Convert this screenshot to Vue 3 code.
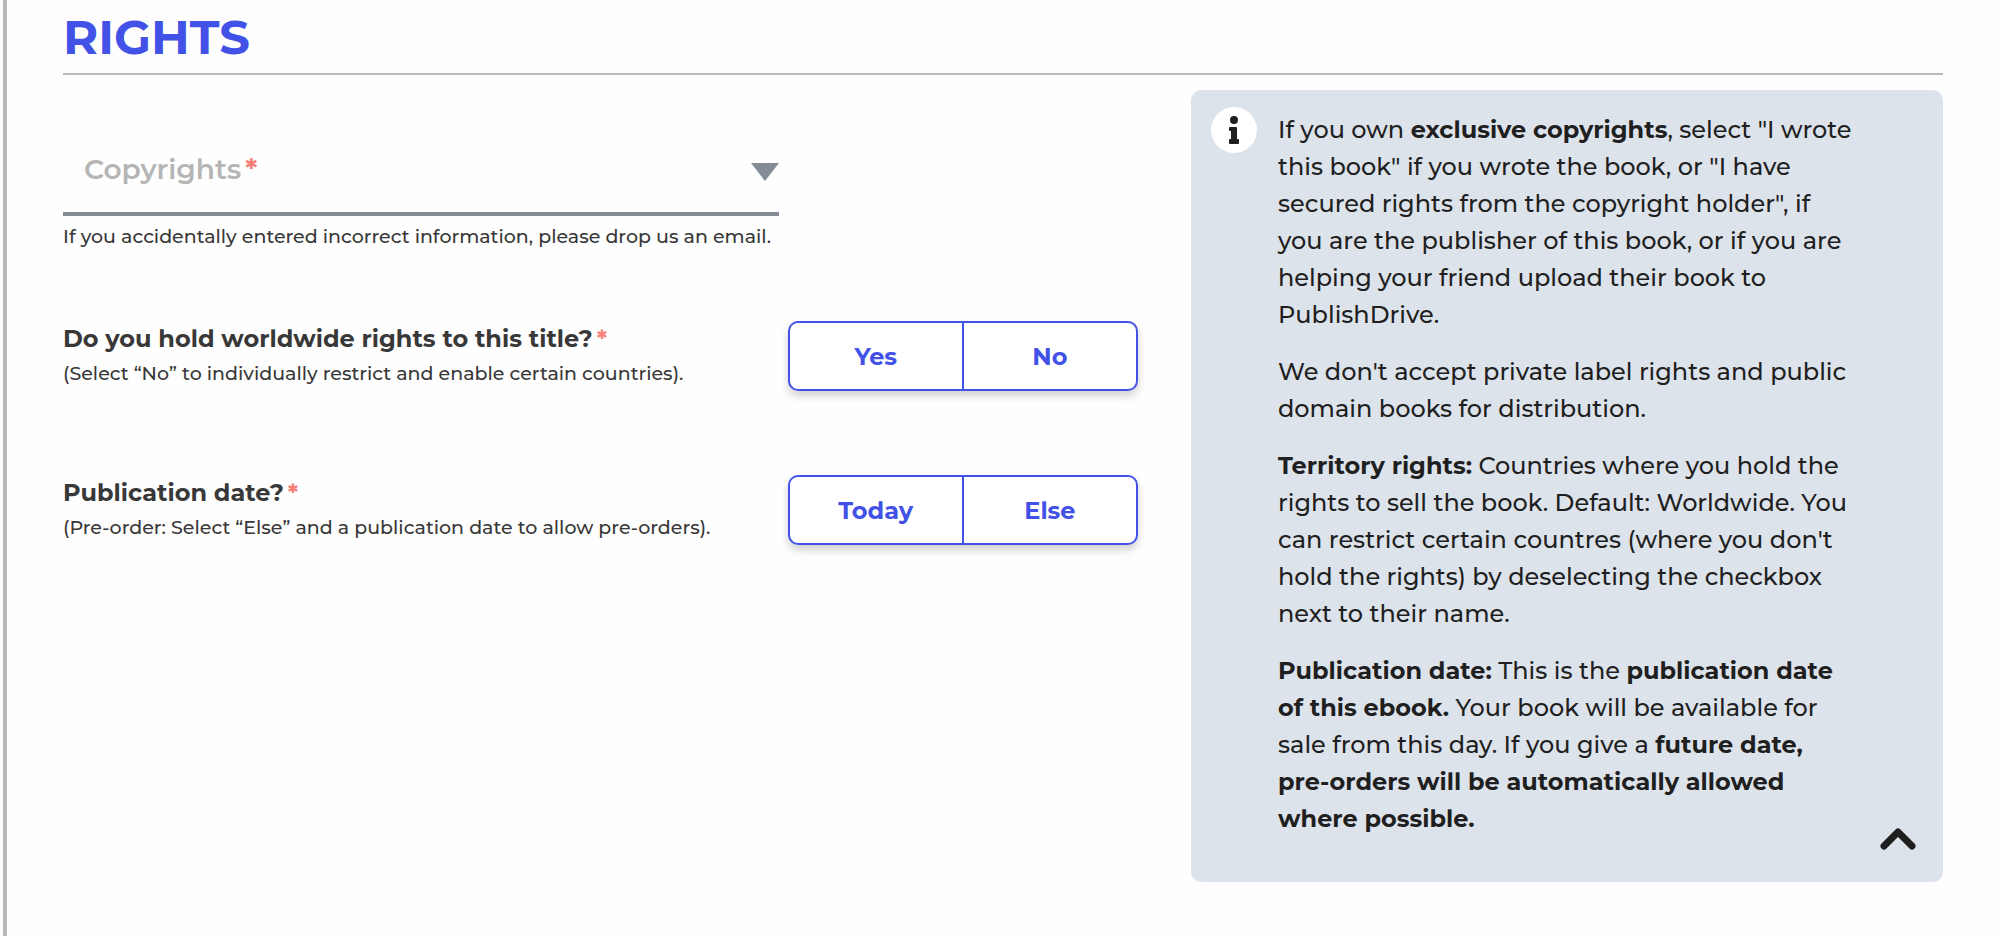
<template>
  <section class="rights">
    <h1 class="title">RIGHTS</h1>

    <div class="columns">
      <form class="form" @submit.prevent>
        <div class="copyright-field">
          <div class="select-box">
            <select id="copyrights" v-model="copyright" class="select" required>
              <option value=""></option>
              <option value="author">I wrote this book</option>
              <option value="publisher">I have secured rights from the copyright holder</option>
            </select>
            <label v-if="!copyright" for="copyrights" class="select-label">
              Copyrights<span class="required">*</span>
            </label>
            <svg class="select-arrow" viewBox="0 0 28 18" aria-hidden="true">
              <path d="M0 0H28L14 18Z" fill="#848d96" />
            </svg>
          </div>
          <p class="note">If you accidentally entered incorrect information, please drop us an email.</p>
        </div>

        <div v-for="q in questions" :key="q.id" class="question">
          <div class="question-text">
            <h2 :id="q.id" class="question-title">{{ q.title }}<span class="required">*</span></h2>
            <p class="note">{{ q.note }}</p>
          </div>
          <div class="toggle" role="group" :aria-labelledby="q.id">
            <button
              v-for="option in q.options"
              :key="option"
              type="button"
              class="toggle-btn"
              :class="{ active: answers[q.id] === option }"
              @click="answers[q.id] = option"
            >
              {{ option }}
            </button>
          </div>
        </div>
      </form>

      <aside class="info">
        <span class="info-icon">
          <svg viewBox="0 0 12 30" width="12" height="30" aria-hidden="true">
            <circle cx="6" cy="5" r="4" fill="#1f1f1f" />
            <path d="M2 12H8Q9 12 9 13V24H10Q11 24 11 25V28Q11 29 10 29H2Q1 29 1 28V25Q1 24 2 24H3V16H2Q1 16 1 15V13Q1 12 2 12Z" fill="#1f1f1f" />
          </svg>
        </span>

        <div v-show="open" class="info-text">
          <p>
            If you own <strong>exclusive copyrights</strong>, select "I wrote this book" if you wrote the book,
            or "I have secured rights from the copyright holder", if you are the publisher of this book, or if
            you are helping your friend upload their book to PublishDrive.
          </p>
          <p>We don't accept private label rights and public domain books for distribution.</p>
          <p>
            <strong>Territory rights:</strong> Countries where you hold the rights to sell the book. Default:
            Worldwide. You can restrict certain countres (where you don't hold the rights) by deselecting the
            checkbox next to their name.
          </p>
          <p>
            <strong>Publication date:</strong> This is the <strong>publication date of this ebook.</strong>
            Your book will be available for sale from this day. If you give a <strong>future date, pre-orders
            will be automatically allowed where possible.</strong>
          </p>
        </div>

        <button type="button" class="collapse" aria-label="Toggle help" @click="open = !open">
          <svg viewBox="0 0 36 22" width="36" height="22" aria-hidden="true">
            <path d="M4 18L18 4L32 18" fill="none" stroke="#1f1f1f" stroke-width="7" stroke-linecap="round" stroke-linejoin="round" />
          </svg>
        </button>
      </aside>
    </div>
  </section>
</template>

<script setup>
import { ref, reactive } from 'vue';

const copyright = ref('');
const open = ref(true);
const answers = reactive({});

const questions = [
  {
    id: 'worldwide',
    title: 'Do you hold worldwide rights to this title?',
    note: '(Select “No” to individually restrict and enable certain countries).',
    options: ['Yes', 'No']
  },
  {
    id: 'publication',
    title: 'Publication date?',
    note: '(Pre-order: Select “Else” and a publication date to allow pre-orders).',
    options: ['Today', 'Else']
  }
];
</script>

<style>
body {
  background: #fefefe;
}
</style>

<style scoped>
.rights {
  box-sizing: border-box;
  min-height: 100vh;
  margin-left: 3px;
  padding: 8px 56px 40px;
  border-left: 4px solid #b8b8b8;
  font-family: Montserrat, Inter, sans-serif;
  font-weight: 500;
  color: #383838;
}

h1,
h2,
p {
  margin: 0;
}

.title {
  padding-bottom: 7px;
  border-bottom: 2px solid #bbb;
  font-size: 48px;
  font-weight: 700;
  line-height: 58px;
  color: #4251e6;
}

.columns {
  display: grid;
  grid-template-columns: 3fr 2fr;
  align-items: start;
  margin-top: 15px;
}

.form {
  min-width: 0;
  padding: 35px 53px 0 0;
}

.copyright-field {
  width: 66.6%;
  margin-bottom: 67px;
}

.select-box {
  position: relative;
}

.select {
  display: block;
  box-sizing: border-box;
  width: 100%;
  height: 91px;
  padding: 0 48px 0 21px;
  border: none;
  border-bottom: 4px solid #848d96;
  border-radius: 0;
  background: transparent;
  appearance: none;
  font: inherit;
  font-size: 28px;
  color: #383838;
}

.select-label {
  position: absolute;
  inset: 0 48px 4px 21px;
  display: flex;
  align-items: center;
  font-size: 28px;
  font-weight: 600;
  color: #b5b5b5;
  pointer-events: none;
}

.select-arrow {
  position: absolute;
  top: 38px;
  right: 0;
  width: 28px;
  height: 18px;
  pointer-events: none;
}

.select-box + .note {
  margin-top: 4px;
}

.note {
  font-size: 19px;
  line-height: 34px;
  white-space: nowrap;
}

.required {
  margin-left: 4px;
  font-weight: 700;
  color: #f77f78;
}

.question {
  display: grid;
  grid-template-columns: 2fr 1fr;
}

.question + .question {
  margin-top: 84px;
}

.question-text {
  min-width: 0;
}

.question-title {
  font-size: 24px;
  font-weight: 700;
  line-height: 36px;
}

.toggle {
  display: flex;
  height: 70px;
  margin-left: 8px;
  border-radius: 10px;
  box-shadow: 0 5px 8px rgba(0, 0, 0, 0.18);
}

.toggle-btn {
  flex: 1;
  padding: 0;
  border: 2px solid #4251e6;
  background: #fff;
  font: inherit;
  font-size: 24px;
  font-weight: 700;
  color: #4251e6;
  cursor: pointer;
}

.toggle-btn:first-child {
  border-right: none;
  border-radius: 10px 0 0 10px;
}

.toggle-btn:last-child {
  border-radius: 0 10px 10px 0;
}

.toggle-btn.active {
  background: #4251e6;
  color: #fff;
}

.info {
  display: grid;
  grid-template-columns: 46px 1fr 36px;
  column-gap: 21px;
  padding: 17px 27px 32px 20px;
  border-radius: 10px;
  background: #dde3eb;
  color: #1f1f1f;
}

.info-icon {
  display: flex;
  align-items: center;
  justify-content: center;
  width: 46px;
  height: 46px;
  border-radius: 50%;
  background: #fff;
}

.info-text {
  display: flex;
  flex-direction: column;
  gap: 20px;
  padding: 4px 0 13px;
  font-size: 24px;
  line-height: 37px;
}

.info-text strong {
  font-weight: 700;
}

.collapse {
  grid-column: 3;
  align-self: end;
  display: flex;
  padding: 0;
  border: none;
  background: none;
  cursor: pointer;
}

@media (max-width: 1300px) {
  .columns {
    grid-template-columns: 1fr;
    gap: 60px;
  }

  .form {
    padding-right: 0;
  }

  .note {
    white-space: normal;
  }
}
</style>
